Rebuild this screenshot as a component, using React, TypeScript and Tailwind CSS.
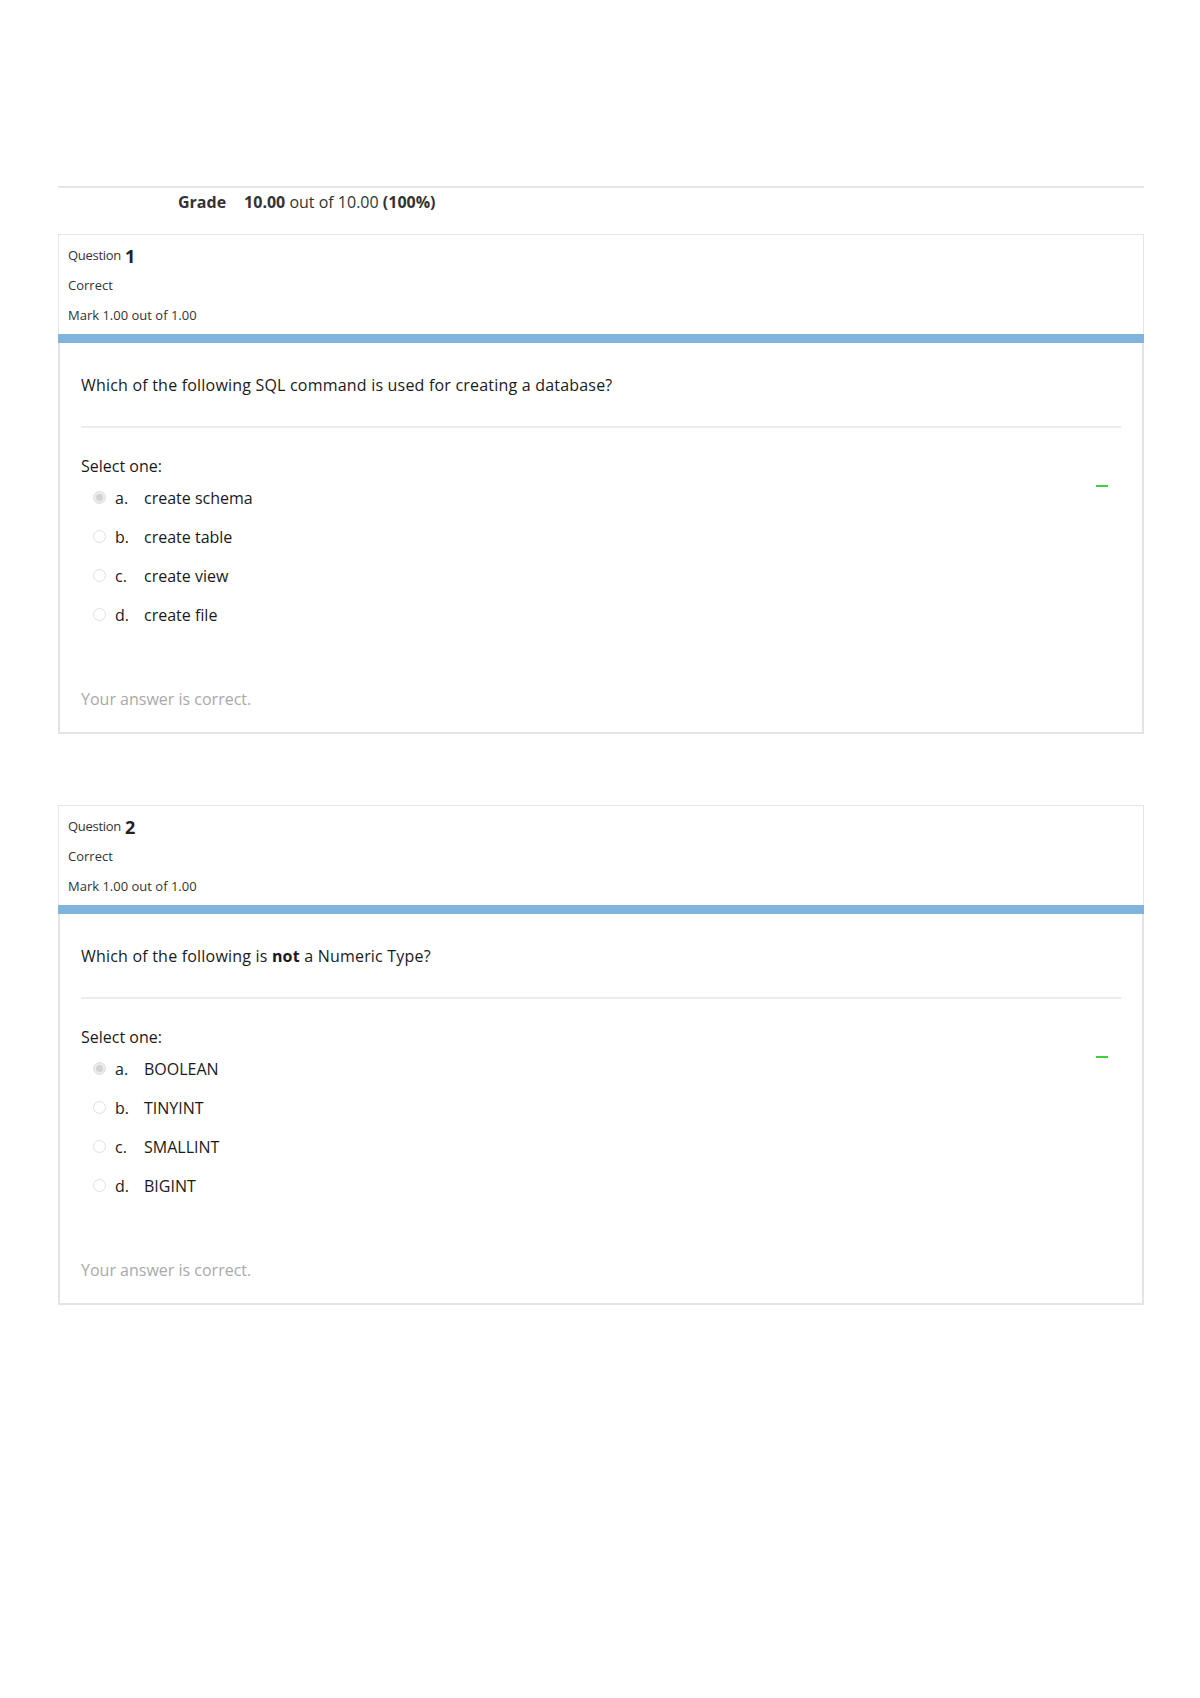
import React from "react";

interface Option {
  letter: string;
  text: string;
}

interface Question {
  num: number;
  text: React.ReactNode;
  options: Option[];
  selected: number;
}

const questions: Question[] = [
  {
    num: 1,
    text: "Which of the following SQL command is used for creating a database?",
    options: [
      { letter: "a.", text: "create schema" },
      { letter: "b.", text: "create table" },
      { letter: "c.", text: "create view" },
      { letter: "d.", text: "create file" },
    ],
    selected: 0,
  },
  {
    num: 2,
    text: (
      <>
        Which of the following is <b className="font-bold">not</b> a Numeric
        Type?
      </>
    ),
    options: [
      { letter: "a.", text: "BOOLEAN" },
      { letter: "b.", text: "TINYINT" },
      { letter: "c.", text: "SMALLINT" },
      { letter: "d.", text: "BIGINT" },
    ],
    selected: 0,
  },
];

const Radio = ({ checked }: { checked: boolean }) =>
  checked ? (
    <span className="flex h-[13px] w-[13px] items-center justify-center rounded-full border border-[#dedede] bg-[#ececec]">
      <span className="block h-[7px] w-[7px] rounded-full bg-[#d2d2d2]" />
    </span>
  ) : (
    <span className="block h-[13px] w-[13px] rounded-full border border-[#e0e0e0] bg-white" />
  );

const QuestionCard = ({ q }: { q: Question }) => (
  <div>
    <div className="border border-b-0 border-[#e3e6ea] pl-[9px] pt-[6px] pb-[3px] text-[13px] text-[#333]">
      <div className="flex h-[30px] items-center gap-[4px]">
        <span className="tracking-[-0.3px]">Question</span>
        <span className="text-[18px] font-bold text-[#222]">{q.num}</span>
      </div>
      <div className="flex h-[30px] items-center">Correct</div>
      <div className="flex h-[30px] items-center">Mark 1.00 out of 1.00</div>
    </div>
    <div className="h-[9px] bg-[#7fb5dc]" />
    <div className="border-2 border-t-0 border-[#e1e4e8] px-[21px] pt-[30px] pb-[21px] text-[16px] text-[#1a1a1a]">
      <div className="leading-[24px] tracking-[0.2px]">{q.text}</div>
      <div className="mt-[29px] h-[2px] bg-[#eaecee]" />
      <div className="mt-[26px] flex items-start justify-between">
        <div>
          <div className="leading-[24px]">Select one:</div>
          {q.options.map((o, i) => (
            <div key={o.letter} className="flex h-[39px] items-center">
              <span className="ml-[12px] mr-[9px]">
                <Radio checked={i === q.selected} />
              </span>
              <span className="w-[29px]">{o.letter}</span>
              <span>{o.text}</span>
            </div>
          ))}
        </div>
        <div className="mt-[31px] mr-[13px] h-[2px] w-[12px] bg-[#3fcf3f]" />
      </div>
      <div className="mt-[53px] leading-[24px] text-[#a9a9a9]">
        Your answer is correct.
      </div>
    </div>
  </div>
);

export default function App() {
  return (
    <div
      className="min-h-[1698px] bg-white pt-[186px]"
      style={{ fontFamily: '"Open Sans", "Noto Sans", sans-serif' }}
    >
      <div className="ml-[58px] w-[1086px]">
        <div className="h-[2px] bg-[#e3e6ea]" />
        <div className="flex h-[28px] items-center gap-[18px] pl-[120px] text-[16px] text-[#333]">
          <span className="font-bold">Grade</span>
          <span>
            <b className="font-bold">10.00</b> out of 10.00{" "}
            <b className="font-bold">(100%)</b>
          </span>
        </div>
        <div className="mt-[18px]">
          <QuestionCard q={questions[0]} />
        </div>
        <div className="mt-[71px]">
          <QuestionCard q={questions[1]} />
        </div>
      </div>
    </div>
  );
}
